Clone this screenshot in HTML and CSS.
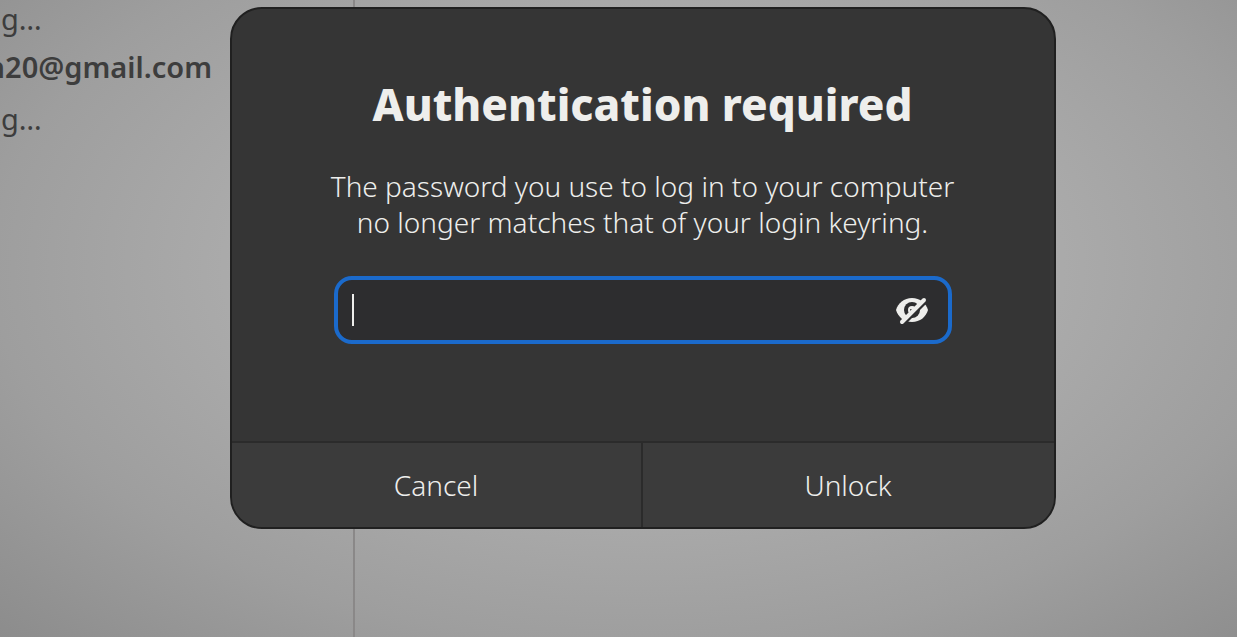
FILE: index.html
```
<!DOCTYPE html>
<html lang="en">
<head>
  <meta charset="UTF-8">
  <title>Authentication required</title>
  <link rel="stylesheet" href="styles.css">
</head>
<body>

  <!-- Mail window behind the dialog -->
  <div class="window">
    <aside class="sidebar">
      <p class="status">g…</p>
      <p class="account"><span>n20@gmail.com</span></p>
      <p class="status">g…</p>
    </aside>
  </div>

  <div class="overlay">
    <form class="dialog" role="dialog" aria-labelledby="title">
      <div class="content">
        <h1 id="title">Authentication required</h1>
        <label class="message" for="password">
          The password you use to log in to your computer<br>
          no longer matches that of your login keyring.
        </label>
        <div class="entry">
          <span class="caret"></span>
          <input type="password" id="password">
          <button type="button" class="peek" aria-label="Show password">
            <svg viewBox="0 0 32 32" width="32" height="32">
              <defs>
                <mask id="slash">
                  <rect width="32" height="32" fill="#fff"/>
                  <circle cx="16" cy="16" r="8" fill="#000"/>
                  <circle cx="16" cy="16" r="4" fill="#fff"/>
                  <circle cx="15" cy="16" r="1" fill="#000"/>
                  <path d="M1 31 31 1V9L9 31Z" fill="#000"/>
                </mask>
              </defs>
              <path d="M16 4C8 4 2 9 0 16c2 7 8 12 16 12s14-5 16-12C30 9 24 4 16 4Z" fill="#eeeeec" mask="url(#slash)"/>
              <path d="M6 28 28 6" stroke="#eeeeec" stroke-width="4" stroke-linecap="round"/>
            </svg>
          </button>
        </div>
      </div>
      <div class="buttons">
        <button type="button" class="cancel">Cancel</button>
        <button type="submit">Unlock</button>
      </div>
    </form>
  </div>

</body>
</html>
```

FILE: styles.css
```
* {
  box-sizing: border-box;
}

body {
  margin: 0;
  min-height: 100vh;
  display: grid;
  background: radial-gradient(ellipse 1000px 580px at 52% 42%, #b2b2b2 20%, #aaaaaa 42%, #9e9e9e 65%, #8b8b8b 92%);
  color: #eeeeec;
  font-family: "Noto Sans", sans-serif;
  font-size: 28px;
  font-weight: 350;
  overflow: hidden;
}

.window,
.overlay {
  grid-area: 1 / 1;
}

.sidebar {
  width: 355px;
  height: 100%;
  border-right: 2px solid #8a8888;
  color: #3d3d3d;
  font-size: 29px;
}

.sidebar p {
  margin: 0;
  line-height: 50px;
  overflow: hidden;
}

.sidebar .status {
  padding-left: 1px;
  line-height: 38px;
  font-weight: 400;
}

.sidebar .account {
  display: flex;
  justify-content: flex-end;
  width: 212px;
  margin: 4px 0 8px;
  font-weight: 600;
}

.overlay {
  display: flex;
  justify-content: center;
  align-items: flex-start;
  padding: 7px 0 0 48px;
}

.dialog {
  width: 826px;
  max-width: 100%;
  border: 2px solid #202020;
  border-radius: 32px;
  background: #353535;
  overflow: hidden;
  z-index: 1;
}

.content {
  display: flex;
  flex-direction: column;
  align-items: center;
  padding: 63px 48px 97px;
}

h1 {
  margin: 0 0 32px;
  font-size: 44px;
  font-weight: 800;
  line-height: 64px;
}

.message {
  line-height: 36px;
  text-align: center;
  white-space: nowrap;
}

.entry {
  display: flex;
  align-items: center;
  width: 618px;
  max-width: 100%;
  height: 68px;
  margin-top: 36px;
  padding: 0 20px 0 14px;
  border: 4px solid #1b6acb;
  border-radius: 18px;
  background: #2d2d2f;
}

.caret {
  width: 2px;
  height: 32px;
  background: #eeeeec;
}

.entry input {
  flex: 1;
  min-width: 0;
  padding: 0;
  border: none;
  outline: none;
  background: none;
  color: inherit;
  font: inherit;
}

.peek {
  display: flex;
  padding: 0;
  border: none;
  background: none;
  cursor: pointer;
}

.buttons {
  display: flex;
  border-top: 2px solid #2b2b2b;
}

.buttons button {
  width: 50%;
  height: 84px;
  border: none;
  background: #3b3b3b;
  color: inherit;
  font: inherit;
  cursor: pointer;
}

.buttons .cancel {
  border-right: 2px solid #2b2b2b;
}

.buttons button:hover {
  background: #424242;
}
```
